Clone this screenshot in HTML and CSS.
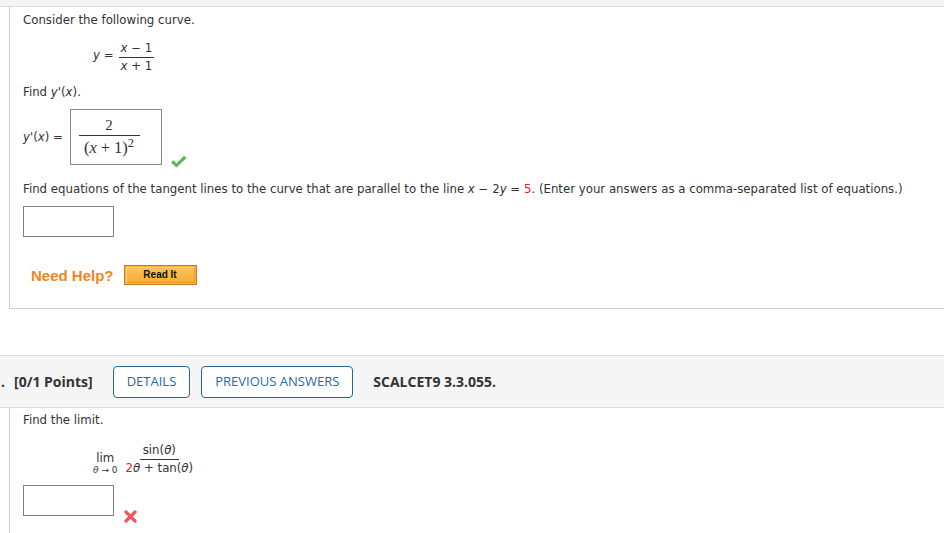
FILE: index.html
```html
<!DOCTYPE html>
<html>
<head>
<meta charset="utf-8">
<link rel="stylesheet" href="styles.css">
</head>
<body>
<div class="topstrip"></div>
<div class="card card1">
  <p class="line first">Consider the following curve.</p>
  <div class="eq">
    <span class="lhs"><i>y</i> =</span>
    <span class="frac">
      <span class="num"><i>x</i> − 1</span>
      <span class="den"><i>x</i> + 1</span>
    </span>
  </div>
  <p class="line find">Find <i>y</i>'(<i>x</i>).</p>
  <div class="ansrow">
    <span class="lhs2"><i>y</i>'(<i>x</i>) =</span>
    <div class="mathbox">
      <span class="mfrac">
        <span class="mnum">2</span>
        <span class="mden">(<i>x</i><span class="op">+</span>1)<sup>2</sup></span>
      </span>
    </div>
    <svg class="check" width="17" height="13" viewBox="0 0 17 13"><path d="M1 7.5 L3.5 5.5 L6.5 8.5 L14 1 L16.5 3 L6.5 12.5 Z" fill="#5cb85c"/><path d="M1 7.5 L3.5 5.5 L6.5 8.5 L14 1 L16.5 3" fill="none" stroke="#7fcf6a" stroke-width="0.8"/></svg>
  </div>
  <p class="line tangent">Find equations of the tangent lines to the curve that are parallel to the line <i>x</i> − 2<i>y</i> = <span class="red">5</span>. (Enter your answers as a comma-separated list of equations.)</p>
  <div class="inputbox"></div>
  <div class="help">
    <span class="needhelp">Need Help?</span>
    <span class="readit"><span class="readit-in">Read It</span></span>
  </div>
</div>
<div class="gap"></div>
<div class="qhead">
  <span class="points"><span class="dot">.</span>[0/1 Points]</span>
  <span class="btn">DETAILS</span>
  <span class="btn">PREVIOUS ANSWERS</span>
  <span class="code">SCALCET9 3.3.055.</span>
</div>
<div class="card card2">
  <p class="line first2">Find the limit.</p>
  <div class="limrow">
    <span class="lim">
      <span class="limword">lim</span>
      <span class="limsub"><i>θ</i> → 0</span>
    </span>
    <span class="frac lfrac">
      <span class="num">sin(<i>θ</i>)</span>
      <span class="den"><span class="red">2</span><i>θ</i> + tan(<i>θ</i>)</span>
    </span>
  </div>
  <div class="xrow">
    <div class="inputbox"></div>
    <svg class="xmark" width="13" height="13" viewBox="0 0 13 13"><path d="M2 2 L11 11 M11 2 L2 11" stroke="#f2575a" stroke-width="3.2" stroke-linecap="round"/></svg>
  </div>
</div>
</body>
</html>
```
FILE: styles.css
```css
html, body {
  margin: 0;
  padding: 0;
  background: #fff;
}
body {
  font-family: "DejaVu Sans", Verdana, sans-serif;
  font-size: 11.75px;
  color: #333;
  width: 944px;
  height: 533px;
  overflow: hidden;
}
.topstrip {
  height: 6px;
  background: #f4f4f4;
  border-bottom: 1px solid #ddd;
}
.card {
  margin-left: 9px;
  border-left: 1px solid #ccc;
  padding-left: 13px;
}
.card1 {
  height: 301px;
  border-bottom: 1px solid #ccc;
  display: flex;
  flex-direction: column;
}
.line {
  margin: 0;
  line-height: 16px;
}
.first {
  margin-top: 5px;
}
.eq {
  display: flex;
  align-items: center;
  margin-left: 70px;
  margin-top: 13px;
  height: 32px;
}
.lhs {
  margin-right: 5px;
  margin-top: -4px;
}
.frac {
  display: inline-flex;
  flex-direction: column;
  align-items: center;
}
.frac .num {
  padding: 0 2px 1px;
  line-height: 15px;
  border-bottom: 1px solid #333;
}
.frac .den {
  padding: 1px 2px 0;
  line-height: 15px;
}
.find {
  margin-top: 11px;
}
.ansrow {
  display: flex;
  align-items: center;
  margin-top: 9px;
  height: 56px;
}
.lhs2 {
  width: 47px;
}
.mathbox {
  width: 90px;
  height: 54px;
  border: 1px solid #888;
  display: flex;
  align-items: center;
  justify-content: center;
}
.mfrac {
  display: inline-flex;
  flex-direction: column;
  align-items: center;
  font-family: "Liberation Serif", serif;
  color: #333;
  margin-left: -14px;
}
.mnum {
  font-size: 15px;
  line-height: 19px;
  border-bottom: 1px solid #333;
  width: 61px;
  text-align: center;
  margin-bottom: 2px;
}
.mden {
  line-height: 20px;
  font-size: 16.5px;
}
.mden .op {
  margin: 0 4px;
}
.mden sup {
  font-size: 12.5px;
  vertical-align: 6px;
  line-height: 0;
}
.check {
  align-self: flex-end;
  margin-left: 8px;
  margin-bottom: -3px;
}
.tangent {
  margin-top: 16px;
}
.inputbox {
  width: 89px;
  height: 29px;
  border: 1px solid #808080;
  background: #fff;
}
.card1 .inputbox {
  margin-top: 9px;
}
.help {
  display: flex;
  align-items: center;
  margin-top: 28px;
  margin-left: 8px;
}
.needhelp {
  font-family: "Liberation Sans Narrow", "Liberation Sans", Arial, sans-serif;
  font-stretch: condensed;
  font-weight: bold;
  font-size: 15px;
  color: #f0871b;
  margin-right: 10px;
}
.readit {
  display: inline-block;
  border: 1px solid #d17a1c;
  background: #fdb23a;
  padding: 1px;
}
.readit-in {
  display: block;
  width: 67px;
  height: 14px;
  border: 1px solid #fed28a;
  border-right-color: #e89a2c;
  border-bottom-color: #e89a2c;
  background: linear-gradient(#fec15c, #fbad35);
  text-align: center;
  font-family: "Liberation Sans Narrow", "Liberation Sans", Arial, sans-serif;
  font-weight: bold;
  font-size: 10px;
  line-height: 14px;
  color: #111;
}
.gap {
  height: 46px;
}
.qhead {
  height: 51px;
  background: #f5f5f5;
  border-top: 1px solid #ddd;
  border-bottom: 1px solid #ddd;
  display: flex;
  align-items: center;
  font-family: "Open Sans", sans-serif;
  font-size: 13px;
  color: #333;
}
.points {
  font-weight: bold;
  font-size: 14px;
  margin-left: 0;
  margin-right: 20px;
  white-space: pre;
}
.dot {
  display: inline-block;
  margin-left: 1px;
  width: 13px;
}
.btn {
  display: inline-block;
  height: 32px;
  line-height: 28px;
  box-sizing: border-box;
  padding: 0 13px 2px;
  border: 1px solid #2a6496;
  border-radius: 4px;
  color: #1f6aa5;
  background: #fff;
  margin-right: 11px;
}
.code {
  font-weight: bold;
  font-size: 14px;
  margin-left: 9px;
}
.card2 {
  height: 130px;
  display: flex;
  flex-direction: column;
}
.first2 {
  margin-top: 4px;
}
.limrow {
  display: flex;
  align-items: center;
  margin-left: 70px;
  margin-top: 15px;
}
.lim {
  display: inline-flex;
  flex-direction: column;
  align-items: center;
  margin-right: 6px;
  margin-top: 8px;
}
.limword {
  line-height: 13px;
}
.limsub {
  font-size: 9px;
  line-height: 11px;
}
.lfrac .num {
  padding: 0 3px 1px;
}
.red {
  color: #e8191e;
}
.xrow {
  display: flex;
  align-items: flex-end;
  margin-top: 9px;
}
.xmark {
  margin-left: 10px;
  margin-bottom: -7px;
}
```
